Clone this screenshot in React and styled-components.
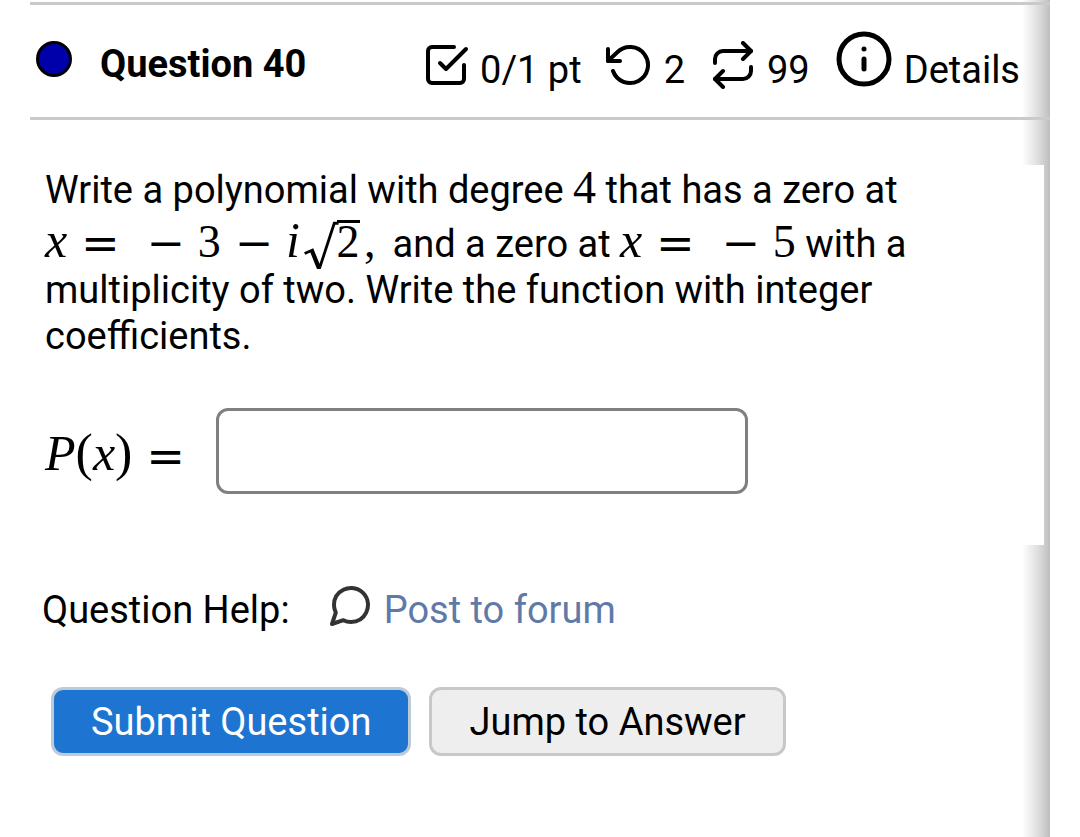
import React from "react";
import styled, { createGlobalStyle } from "styled-components";
import {
    FiCheckSquare,
    FiInfo,
    FiMessageCircle,
    FiRepeat,
    FiRotateCcw,
} from "react-icons/fi";

const GlobalStyle = createGlobalStyle`
    * {
        box-sizing: border-box;
    }

    body {
        margin: 0;
        background-color: #fff;
        color: #000;
        font-family: Roboto, sans-serif;
        font-size: 38px;
        line-height: 46px;
    }
`;

const Page = styled.main`
    min-height: 100vh;
    margin-right: 30px;
    padding: 2px 0 80px 30px;
    background: linear-gradient(to left, #bebebe, #dedede 12px, #fff 28px)
        no-repeat right / 28px 100%;
`;

const Header = styled.header`
    display: flex;
    align-items: center;
    padding: 0 30px 4px 6px;
    height: 118px;
    border-top: 3px solid #cacaca;
    border-bottom: 3px solid #cacaca;
`;

const Status = styled.span`
    width: 36px;
    height: 36px;
    margin-right: 28px;
    border: 3px solid #000;
    border-radius: 50%;
    background-color: #0000aa;
`;

const Title = styled.h1`
    margin: 0;
    padding-top: 10px;
    font-size: 38px;
    font-weight: 700;
`;

const Stats = styled.ul`
    display: flex;
    align-items: flex-end;
    gap: 24px;
    margin: 0 0 0 auto;
    padding: 0;
    list-style: none;
`;

const Stat = styled.li`
    display: flex;
    align-items: flex-end;
    gap: 10px;
    line-height: 38px;
    white-space: nowrap;
`;

const DetailsLink = styled.a`
    display: flex;
    align-items: flex-end;
    gap: 10px;
    color: inherit;
    text-decoration: none;
`;

const Question = styled.section`
    margin: 45px 6px 0 0;
    padding: 2px 15px 51px;
    background-color: #fff;
`;

const Prompt = styled.p`
    margin: 0;
`;

const Formula = styled("math")`
    font-family: "Liberation Serif", serif;
    font-size: 46px;
    white-space: nowrap;
`;

const Variable = styled("mi")`
    font-size: 50px;
    font-style: italic;
`;

const Operator = styled("mo")`
    font-family: "DejaVu Math TeX Gyre", serif;
`;

const Fence = styled("mo")`
    font-size: 52px;
`;

const Root = styled("msqrt")`
    font-family: "DejaVu Math TeX Gyre", serif;
    font-size: 54px;
`;

const Radicand = styled("mn")`
    font-family: "Liberation Serif", serif;
    font-size: 46px;
`;

const Answer = styled.div`
    display: flex;
    align-items: center;
    gap: 18px;
    margin-top: 49px;
`;

const AnswerLabel = styled.label`
    padding-top: 12px;
`;

const AnswerInput = styled.input`
    width: 532px;
    max-width: 100%;
    height: 86px;
    padding: 0 16px;
    border: 3px solid #808080;
    border-radius: 12px;
    background-color: #fff;
    font: inherit;
`;

const Help = styled.div`
    display: flex;
    align-items: center;
    margin-top: 37px;
    padding-left: 12px;
`;

const ForumLink = styled.a`
    display: flex;
    align-items: center;
    gap: 10px;
    margin-left: 36px;
    color: #5f7aa8;
    text-decoration: none;
`;

const ForumIcon = styled(FiMessageCircle)`
    margin-bottom: 8px;
    color: #333;
`;

const Actions = styled.div`
    display: flex;
    gap: 18px;
    margin-top: 49px;
    padding-left: 21px;
`;

const Button = styled.button`
    height: 69px;
    padding: 0 37px;
    border: 3px solid ${(props) => (props.$primary ? "#bccbd8" : "#c8c8c8")};
    border-radius: 12px;
    background-color: ${(props) => (props.$primary ? "#1e74d1" : "#eee")};
    color: ${(props) => (props.$primary ? "#fff" : "#000")};
    font: inherit;
`;

const Var = ({ children }) => (
    <Variable mathvariant="normal">{children}</Variable>
);

const Op = ({ children }) => (
    <Operator form="infix" lspace="15px" rspace="14px">
        {children}
    </Operator>
);

const App = () => (
    <>
        <GlobalStyle />
        <Page>
            <Header>
                <Status role="img" aria-label="Unattempted" />
                <Title>Question 40</Title>
                <Stats>
                    <Stat>
                        <FiCheckSquare size={48} />
                        <span>0/1 pt</span>
                    </Stat>
                    <Stat>
                        <FiRotateCcw size={48} />
                        <span>2</span>
                    </Stat>
                    <Stat>
                        <FiRepeat size={48} />
                        <span>99</span>
                    </Stat>
                    <Stat>
                        <DetailsLink href="#details">
                            <FiInfo size={60} />
                            <span>Details</span>
                        </DetailsLink>
                    </Stat>
                </Stats>
            </Header>
            <Question>
                <Prompt>
                    Write a polynomial with degree{" "}
                    <Formula>
                        <mn>4</mn>
                    </Formula>{" "}
                    that has a zero at{" "}
                    <Formula>
                        <Var>x</Var>
                        <Op>=</Op>
                        <Op>−</Op>
                        <mn>3</mn>
                        <Op>−</Op>
                        <Var>i</Var>
                        <Root>
                            <Radicand>2</Radicand>
                        </Root>
                        <mo>,</mo>
                    </Formula>{" "}
                    and a zero at{" "}
                    <Formula>
                        <Var>x</Var>
                        <Op>=</Op>
                        <Op>−</Op>
                        <mn>5</mn>
                    </Formula>{" "}
                    with a{" "}
                    <span>
                        multiplicity of two. Write the function with integer
                        coefficients.
                    </span>
                </Prompt>
                <Answer>
                    <AnswerLabel htmlFor="answer">
                        <Formula>
                            <Var>P</Var>
                            <Fence stretchy="false">(</Fence>
                            <Var>x</Var>
                            <Fence stretchy="false">)</Fence>
                            <Op>=</Op>
                        </Formula>
                    </AnswerLabel>
                    <AnswerInput id="answer" type="text" autoComplete="off" />
                </Answer>
            </Question>
            <Help>
                <span>Question Help:</span>
                <ForumLink href="#forum">
                    <ForumIcon size={48} />
                    Post to forum
                </ForumLink>
            </Help>
            <Actions>
                <Button type="button" $primary>
                    Submit Question
                </Button>
                <Button type="button">Jump to Answer</Button>
            </Actions>
        </Page>
    </>
);

export default App;
